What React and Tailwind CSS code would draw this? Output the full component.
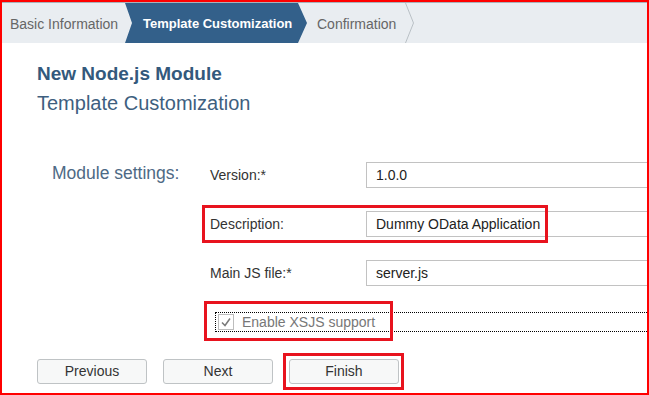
const Field = ({ label, value }) => (
  <div className="flex h-[26px] items-center">
    <div className="w-[156px] text-[14px] text-[#333]">{label}</div>
    <div className="flex h-[26px] w-[320px] shrink-0 items-center border border-[#c2c2c2] bg-white px-[9px] text-[14px] text-[#222]">
      {value}
    </div>
  </div>
);

const Btn = ({ children }) => (
  <button className="h-[25px] w-[110px] rounded-[3px] border border-[#bfc3c5] bg-[#f7f8f8] text-[14px] text-[#333]">
    {children}
  </button>
);

export default function App() {
  return (
    <div className="relative h-[395px] w-[649px] overflow-hidden border-2 border-[#ff0000] bg-white font-['Liberation_Sans',Arial,sans-serif]">
      <div className="flex h-[41px] border-t border-[#a9b2ba] bg-[#e9edf1] pt-[2px] text-[14px]">
        <div className="flex w-[123px] items-center pl-[8px] text-[#666]">Basic Information</div>
        <div className="-mt-[2px] flex w-[182px] items-center bg-[#33608a] pl-[18px] pt-[2px] text-[13px] font-semibold text-white [clip-path:polygon(0_0,173px_0,182px_50%,173px_100%,0_100%,7px_50%)]">
          Template Customization
        </div>
        <div className="flex w-[98px] items-center pl-[10px] text-[#666]">Confirmation</div>
        <svg width="10" height="40" viewBox="0 0 10 40" className="-mt-[2px] shrink-0">
          <polyline points="0.5,0 8.5,20 0.5,40" fill="none" stroke="#b9c0c6" strokeWidth="1" />
        </svg>
      </div>

      <div className="pl-[35px]">
        <div className="mt-[19px] text-[19px] font-bold leading-[24px] text-[#33597c]">New Node.js Module</div>
        <div className="mt-[4px] text-[20px] leading-[26px] text-[#3e5f7f]">Template Customization</div>

        <div className="mt-[46px] flex">
          <div className="w-[173px] shrink-0 pl-[15px] text-[17.5px] leading-[22px] text-[#4e6a85]">Module settings:</div>
          <div className="flex flex-col">
            <Field label="Version:*" value="1.0.0" />
            <div className="mt-[23px]">
              <Field label="Description:" value="Dummy OData Application" />
            </div>
            <div className="mt-[23px]">
              <Field label="Main JS file:*" value="server.js" />
            </div>
            <div className="ml-[5px] mt-[26px] flex h-[20px] w-[440px] items-center border border-dotted border-black pl-[2px]">
              <span className="flex h-[16px] w-[16px] items-center justify-center border border-[#bdbdbd] bg-white">
                <svg width="12" height="12" viewBox="0 0 12 12">
                  <polyline points="2,6.5 5,9.5 10,2.5" fill="none" stroke="#7a7a7a" strokeWidth="1.5" />
                </svg>
              </span>
              <span className="ml-[8px] text-[14px] text-[#777]">Enable XSJS support</span>
            </div>
          </div>
        </div>

        <div className="mt-[27px] flex gap-[16px]">
          <Btn>Previous</Btn>
          <Btn>Next</Btn>
          <Btn>Finish</Btn>
        </div>
      </div>

      <div className="pointer-events-none absolute left-[200px] top-[203px] h-[38px] w-[346px] border-[3px] border-[#e8131e]" />
      <div className="pointer-events-none absolute left-[202px] top-[299px] h-[40px] w-[189px] border-[3px] border-[#e8131e]" />
      <div className="pointer-events-none absolute left-[281px] top-[351px] h-[37px] w-[121px] border-[3px] border-[#e8131e]" />
    </div>
  );
}
